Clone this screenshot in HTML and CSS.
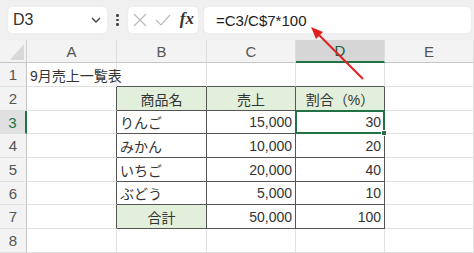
FILE: index.html
```html
<!DOCTYPE html>
<html lang="ja">
  <head>
    <meta charset="UTF-8" />
    <meta name="viewport" content="width=device-width, initial-scale=1.0" />
    <title>9月売上一覧表</title>
    <link rel="stylesheet" href="styles.css">
  </head>
  <body>
    <div class="app">
      <!-- Formula bar -->
      <div class="toolbar">
        <div class="namebox">
          <span>D3</span>
          <svg class="chevron" width="10" height="6" viewBox="0 0 10 6">
            <polyline points="1,1 5,5 9,1" />
          </svg>
        </div>
        <div class="grip"><i></i><i></i><i></i></div>
        <div class="fxbox">
          <svg class="btn" width="14" height="14" viewBox="0 0 14 14">
            <line x1="1" y1="1" x2="13" y2="13" />
            <line x1="13" y1="1" x2="1" y2="13" />
          </svg>
          <svg class="btn" width="16" height="14" viewBox="0 0 16 14">
            <polyline points="1,7 6,12 15,2" />
          </svg>
          <span class="fx">fx</span>
        </div>
        <div class="formula">=C3/C$7*100</div>
      </div>

      <!-- Sheet grid -->
      <div class="sheet">
        <div class="corner"></div>
        <div class="ch">A</div>
        <div class="ch">B</div>
        <div class="ch">C</div>
        <div class="ch active">D</div>
        <div class="ch">E</div>

        <!-- Row 1 -->
        <div class="rh">1</div>
        <div class="c title">9月売上一覧表</div>
        <div class="c edge-top"></div>
        <div class="c edge-top"></div>
        <div class="c edge-top"></div>
        <div class="c"></div>

        <!-- Row 2 -->
        <div class="rh">2</div>
        <div class="c edge-left"></div>
        <div class="c tb hd center">商品名</div>
        <div class="c tb hd center">売上</div>
        <div class="c tb hd center">割合（%）</div>
        <div class="c"></div>

        <!-- Row 3 -->
        <div class="rh active">3</div>
        <div class="c edge-left"></div>
        <div class="c tb">りんご</div>
        <div class="c tb num">15,000</div>
        <div class="c tb num sel">30</div>
        <div class="c"></div>

        <!-- Row 4 -->
        <div class="rh">4</div>
        <div class="c edge-left"></div>
        <div class="c tb">みかん</div>
        <div class="c tb num">10,000</div>
        <div class="c tb num">20</div>
        <div class="c"></div>

        <!-- Row 5 -->
        <div class="rh">5</div>
        <div class="c edge-left"></div>
        <div class="c tb">いちご</div>
        <div class="c tb num">20,000</div>
        <div class="c tb num">40</div>
        <div class="c"></div>

        <!-- Row 6 -->
        <div class="rh">6</div>
        <div class="c edge-left"></div>
        <div class="c tb">ぶどう</div>
        <div class="c tb num">5,000</div>
        <div class="c tb num">10</div>
        <div class="c"></div>

        <!-- Row 7 -->
        <div class="rh">7</div>
        <div class="c edge-left"></div>
        <div class="c tb hd center">合計</div>
        <div class="c tb num">50,000</div>
        <div class="c tb num">100</div>
        <div class="c"></div>

        <!-- Row 8 -->
        <div class="rh">8</div>
        <div class="c"></div>
        <div class="c"></div>
        <div class="c"></div>
        <div class="c"></div>
        <div class="c"></div>
      </div>

      <!-- Callout arrow -->
      <svg class="arrow" width="474" height="253" viewBox="0 0 474 253">
        <line x1="363" y1="79" x2="318" y2="34" />
        <polygon points="311,27 323,32 316,39" />
      </svg>
    </div>
  </body>
</html>
```

FILE: styles.css
```css
body {
  margin: 0;
  font-family: "Liberation Sans", "Noto Sans CJK JP", sans-serif;
  color: #333;
  background-color: #fff;
}

.app {
  position: relative;
  width: 474px;
  height: 253px;
  overflow: hidden;
}

/* formula bar */

.toolbar {
  display: flex;
  align-items: center;
  height: 40px;
  padding: 0 3px 0 8px;
  box-sizing: border-box;
  background-color: #f0f0f0;
}

.namebox,
.fxbox,
.formula {
  height: 26px;
  background-color: #fff;
  border-radius: 4px;
  box-shadow: 0 0 1px rgba(0, 0, 0, 0.15);
  box-sizing: border-box;
  display: flex;
  align-items: center;
}

.namebox {
  width: 99px;
  padding: 0 6px 0 5px;
  justify-content: space-between;
  font-size: 16px;
  color: #333;
}

.chevron polyline {
  fill: none;
  stroke: #444;
  stroke-width: 1.4;
}

.grip {
  width: 21px;
  display: flex;
  flex-direction: column;
  align-items: center;
  gap: 2px;
}

.grip i {
  width: 2.5px;
  height: 2.5px;
  background-color: #444;
  border-radius: 50%;
}

.fxbox {
  width: 70px;
  padding: 0 4px 0 5px;
  justify-content: space-between;
}

.btn line,
.btn polyline {
  fill: none;
  stroke: #bbb;
  stroke-width: 1.2;
}

.fx {
  font-family: "Liberation Serif", serif;
  font-style: italic;
  font-weight: bold;
  font-size: 17px;
  color: #333;
  padding-bottom: 2px;
}

.formula {
  flex: 1;
  margin-left: 6px;
  padding-left: 12px;
  font-size: 15px;
  color: #222;
}

/* sheet */

.sheet {
  display: grid;
  grid-template-columns: 27px 90px 90px 89px 89px 89px;
  grid-template-rows: 23px 24px 24px 23px 24px 24px 23px 24px 24px;
  font-size: 14px;
}

.sheet > div {
  box-sizing: border-box;
  display: flex;
  align-items: center;
  white-space: nowrap;
}

.corner {
  background-color: #f3f3f3;
  border-right: 1px solid #d0d0d0;
  border-bottom: 1px solid #c6c6c6;
  position: relative;
}

.corner::after {
  content: "";
  position: absolute;
  right: 2px;
  bottom: 2px;
  border-style: solid;
  border-width: 0 0 16px 14px;
  border-color: transparent transparent #d8d8d8 transparent;
}

.ch {
  justify-content: center;
  font-size: 15px;
  background-color: #f3f3f3;
  color: #555;
  border-right: 1px solid #dedede;
  border-bottom: 1px solid #c6c6c6;
}

.ch.active {
  background-color: #d6d6d6;
  color: #17603a;
  border-bottom: 2px solid #217346;
}

.rh {
  justify-content: center;
  font-size: 15px;
  background-color: #f3f3f3;
  color: #555;
  border-right: 1px solid #c6c6c6;
  border-bottom: 1px solid #dedede;
}

.rh.active {
  background-color: #e0e0e0;
  color: #217346;
  border-right: 2px solid #217346;
}

.c {
  padding: 0 3px;
  border-right: 1px solid #e1e1e1;
  border-bottom: 1px solid #e1e1e1;
}

.title {
  overflow: visible;
}

.edge-top {
  border-bottom-color: #555;
}

.edge-left {
  border-right-color: #555;
}

.tb {
  border-right-color: #555;
  border-bottom-color: #555;
}

.hd {
  background-color: #e2efda;
}

.center {
  justify-content: center;
}

.num {
  justify-content: flex-end;
}

.sel {
  position: relative;
}

.sel::before {
  content: "";
  position: absolute;
  left: -1px;
  top: -1px;
  right: -1px;
  bottom: -1px;
  border: 2px solid #217346;
}

.sel::after {
  content: "";
  position: absolute;
  right: -3px;
  bottom: -3px;
  width: 4px;
  height: 4px;
  background-color: #217346;
  border: 1px solid #fff;
}

/* callout */

.arrow {
  position: absolute;
  left: 0;
  top: 0;
  pointer-events: none;
}

.arrow line {
  stroke: #e0201f;
  stroke-width: 2;
}

.arrow polygon {
  fill: #e0201f;
}
```
